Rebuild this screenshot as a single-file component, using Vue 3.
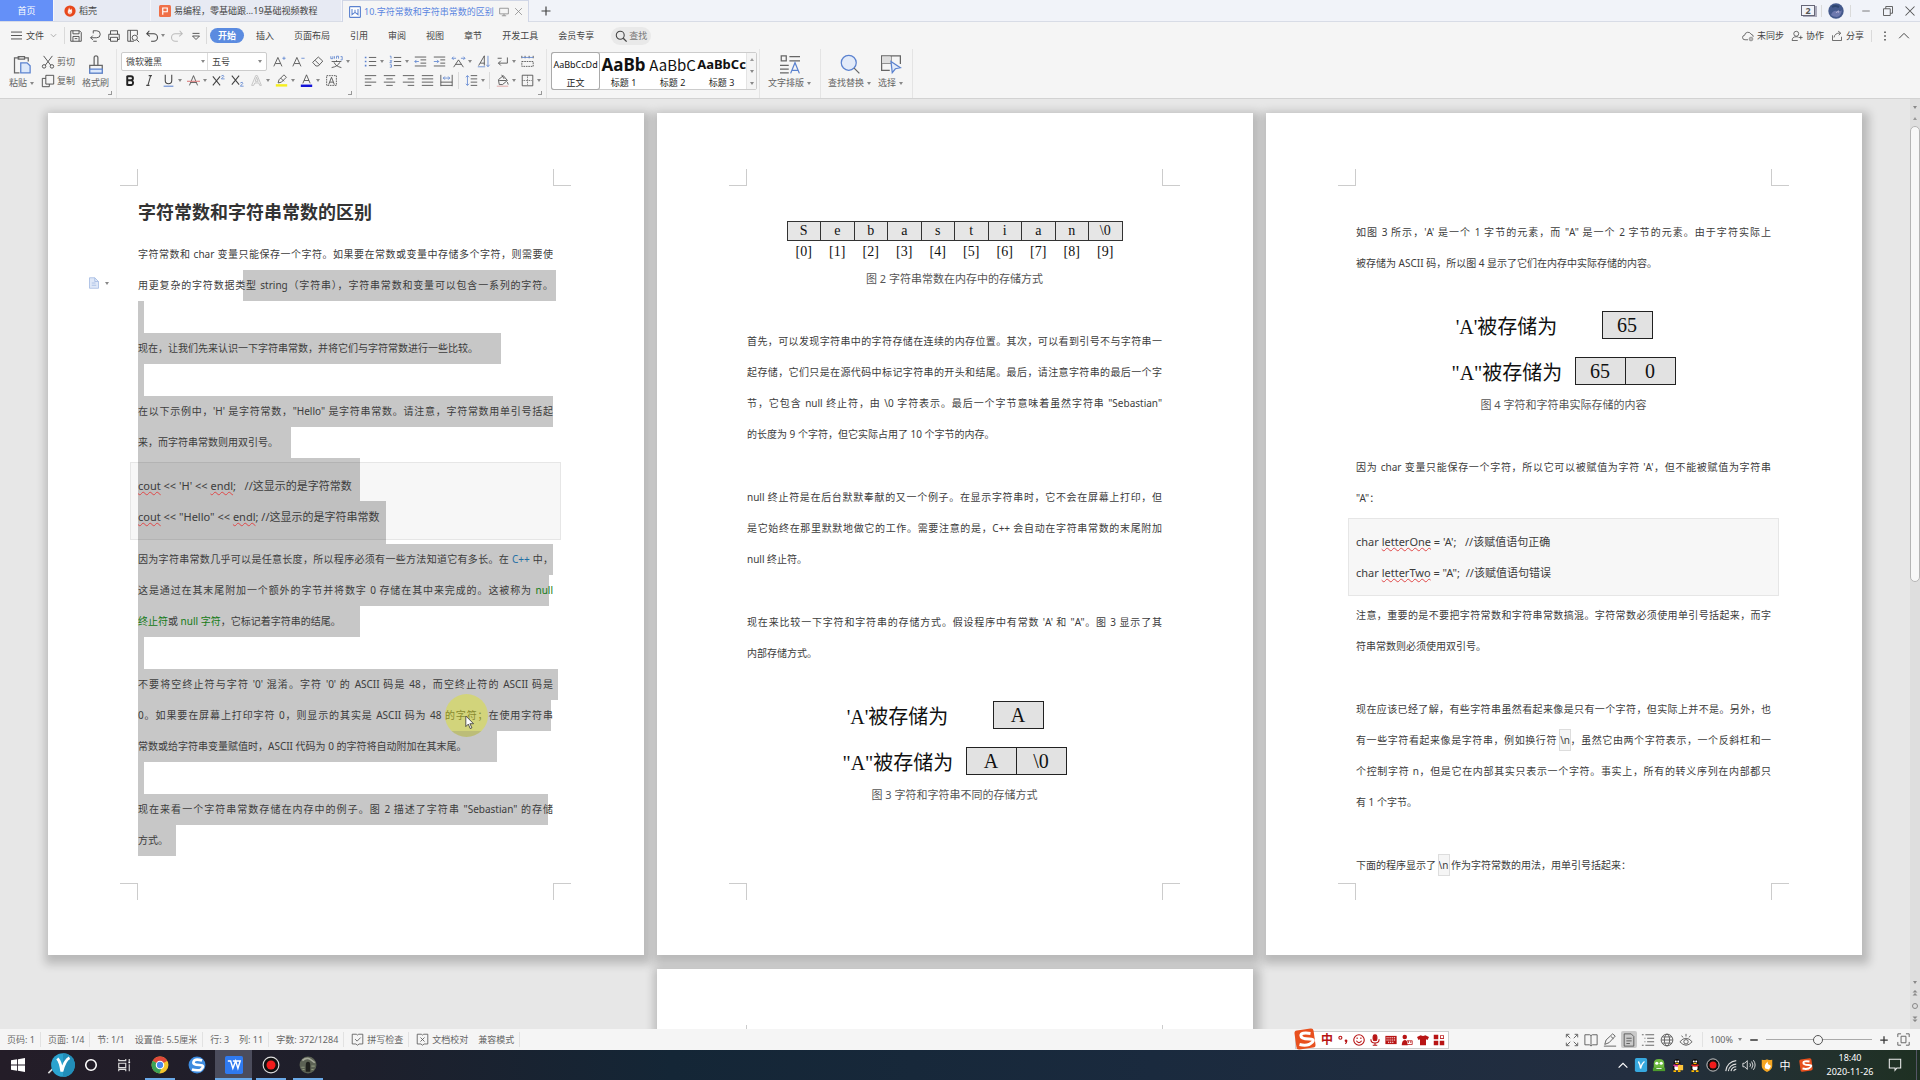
<template>
  <div class="app">
    <header class="titlebar">
      <button class="tab home">首页</button>
      <button v-for="tab in tabs" :key="tab.name" class="tab" :class="[tab.kind, { active: tab.active }]">
        <Icon :name="tab.icon" :size="12" />
        <span class="tab-name">{{ tab.name }}</span>
        <template v-if="tab.active">
          <Icon name="monitor" :size="10" class="dim" />
          <Icon name="close" :size="9" class="dim tab-close" />
        </template>
      </button>
      <button class="new-tab" aria-label="新建"><Icon name="plus" :size="12" /></button>
      <div class="window-tools">
        <span class="window-count">2</span>
        <i class="sep"></i>
        <Icon name="avatar" :size="16" />
        <i class="sep"></i>
        <button v-for="n in ['minimize', 'restore', 'close']" :key="n" :aria-label="n"><Icon :name="n" :size="12" /></button>
      </div>
    </header>

    <nav class="menu">
      <button class="file-menu"><Icon name="menu" :size="11" /><span>文件</span><Icon name="down" :size="7" class="dim" /></button>
      <i class="sep"></i>
      <div class="quick">
        <button v-for="q in quick" :key="q.icon" :class="{ faded: q.faded }" :aria-label="q.icon">
          <Icon :name="q.icon" :size="14" /><i v-if="q.caret" class="caret"></i>
        </button>
      </div>
      <i class="sep"></i>
      <div class="menu-items">
        <button v-for="(m, i) in menus" :key="m" :class="{ current: i === 0 }">{{ m }}</button>
      </div>
      <button class="find"><Icon name="search" :size="12" />查找</button>
      <div class="menu-right">
        <button v-for="a in actions" :key="a.text"><Icon :name="a.icon" :size="12" />{{ a.text }}</button>
        <i class="sep"></i>
        <button aria-label="more"><Icon name="dots" :size="12" /></button>
        <button aria-label="collapse"><Icon name="up" :size="12" /></button>
      </div>
    </nav>

    <section class="ribbon">
      <div class="group clipboard">
        <button class="big"><Icon name="paste" :size="20" /><span>粘贴<i class="caret"></i></span></button>
        <div class="stack">
          <button><Icon name="cut" :size="14" />剪切</button>
          <button><Icon name="copy" :size="14" />复制</button>
        </div>
        <button class="big"><Icon name="brush" :size="20" /><span>格式刷</span></button>
        <i class="corner"></i>
      </div>
      <div class="group font-group">
        <div class="tool-rows">
          <div class="tool-row">
            <span class="combo">
              <select v-model="font" class="font-name" aria-label="字体"><option>微软雅黑</option></select><i class="caret"></i>
              <select v-model="size" class="font-size" aria-label="字号"><option>五号</option></select><i class="caret"></i>
            </span>
            <button v-for="t in fontTools[0]" :key="t.icon" :aria-label="t.icon" class="tool">
              <Icon :name="t.icon" :size="16" class="glyph" /><i v-if="t.caret" class="caret"></i>
            </button>
          </div>
          <div class="tool-row">
            <button v-for="t in fontTools[1]" :key="t.icon" :aria-label="t.icon" class="tool">
              <Icon :name="t.icon" :size="16" class="glyph" /><i v-if="t.caret" class="caret"></i>
            </button>
          </div>
        </div>
        <i class="corner"></i>
      </div>
      <div class="group paragraph">
        <div class="tool-rows">
          <div v-for="(row, i) in paraTools" :key="i" class="tool-row">
            <template v-for="(t, j) in row" :key="j">
              <i v-if="t.sep" class="sep tall"></i>
              <button v-else class="tool" :aria-label="t.icon">
                <Icon :name="t.icon" :size="16" class="glyph" /><i v-if="t.caret" class="caret"></i>
              </button>
            </template>
          </div>
        </div>
        <i class="corner"></i>
      </div>
      <div class="group styles">
        <div class="gallery">
          <button v-for="(s, i) in styles" :key="s.name" class="style" :class="{ chosen: i === 0 }">
            <span class="sample" :class="s.kind">{{ s.sample }}</span>
            <span class="style-name">{{ s.name }}</span>
          </button>
          <div class="gallery-scroll">
            <i class="caret up"></i>
            <i class="caret"></i>
            <i class="caret"></i>
          </div>
        </div>
      </div>
      <div class="group wide">
        <button class="big"><Icon name="layout" :size="20" /><span>文字排版<i class="caret"></i></span></button>
      </div>
      <div class="group wide find-group">
        <button class="big"><Icon name="lens" :size="20" /><span>查找替换<i class="caret"></i></span></button>
        <button class="big"><Icon name="select" :size="20" /><span>选择<i class="caret"></i></span></button>
      </div>
    </section>

    <main class="workspace">
      <div class="pages">
        <article v-for="(page, p) in pages" :key="p" class="page">
          <i class="crop tl"></i><i class="crop tr"></i><i class="crop bl"></i><i class="crop br"></i>
          <template v-for="(block, b) in page" :key="b">
            <h1 v-if="block.title" class="title">{{ block.title }}</h1>
            <div v-else-if="block.blank" class="blank">
              <i v-if="block.sel" class="sel" :style="selStyle(block.sel)"></i>
            </div>
            <table v-else-if="block.cells" class="cells">
              <tbody>
                <tr><td v-for="(c, i) in block.cells" :key="i">{{ c }}</td></tr>
                <tr class="index"><td v-for="(c, i) in block.cells" :key="i">[{{ i }}]</td></tr>
              </tbody>
            </table>
            <div v-else-if="block.figure" class="figure">
              <div v-for="(row, i) in block.figure" :key="i" class="figure-row">
                <span class="figure-label">{{ row.label }}</span>
                <span class="boxes" :class="{ single: row.values.length === 1 }">
                  <b v-for="v in row.values" :key="v">{{ v }}</b>
                </span>
              </div>
            </div>
            <p v-else-if="block.caption" class="line caption">{{ block.caption }}</p>
            <div v-else class="text" :class="{ code: block.code }">
              <p v-for="(line, l) in block.lines" :key="l" class="line" :class="{ full: line.full }">
                <i v-if="line.sel" class="sel" :style="selStyle(line.sel)"></i>
                <span v-if="line.widget" class="paste-option"><Icon name="doc" :size="12" /><i class="caret"></i></span>
                <span v-for="(seg, s) in line.segs" :key="s" :class="seg[1]">{{ seg[0] }}</span>
                <span v-if="line.pointer" class="pointer"><Icon name="cursor" :size="16" class="cursor" /></span>
              </p>
            </div>
          </template>
        </article>
      </div>
      <aside class="scrollbar">
        <i class="caret split"></i>
        <i class="caret up"></i>
        <div class="thumb"></div>
        <div class="jump">
          <i class="caret"></i>
          <Icon name="jumpUp" :size="8" />
          <Icon name="ring" :size="8" />
          <Icon name="jumpDown" :size="8" />
        </div>
      </aside>
    </main>

    <footer class="status">
      <template v-for="(s, i) in status" :key="i">
        <i v-if="s === '|'" class="sep"></i>
        <span v-else class="status-item"><Icon v-if="s.icon" :name="s.icon" :size="13" />{{ s.text || s }}</span>
      </template>
      <div class="ime">
        <Icon name="sogou" :size="22" class="ime-logo" />
        <span class="ime-cn">中</span>
        <Icon v-for="n in ['punct', 'smile', 'mic', 'keyboard', 'person', 'shirt', 'grid']" :key="n" :name="n" :size="12" />
      </div>
      <div class="views">
        <button v-for="v in views" :key="v" :class="{ on: v === 'pageView' }" :aria-label="v"><Icon :name="v" :size="14" /></button>
      </div>
      <i class="sep"></i>
      <button class="zoom-value">100%<i class="caret"></i></button>
      <button aria-label="缩小"><Icon name="minusBold" :size="10" /></button>
      <input v-model="zoom" class="zoom" type="range" min="0" max="100" aria-label="缩放" />
      <button aria-label="放大"><Icon name="plusBold" :size="10" /></button>
      <button class="fit" aria-label="fit"><Icon name="fit" :size="13" /></button>
    </footer>

    <div class="taskbar">
      <button class="start" aria-label="start"><Icon name="windows" :size="14" /></button>
      <button class="vee" aria-label="v"><Icon name="vee" :size="26" /></button>
      <button class="cortana" aria-label="cortana"><Icon name="cortana" :size="14" /></button>
      <button class="taskview" aria-label="task view"><Icon name="taskview" :size="14" /></button>
      <button v-for="a in apps" :key="a.icon" class="app-button" :class="a.state" :aria-label="a.icon">
        <Icon :name="a.icon" :size="18" />
      </button>
      <div class="tray">
        <Icon v-for="t in tray" :key="t" :name="t" :size="14" />
        <span class="tray-cn">中</span>
        <Icon name="sogou" :size="14" class="tray-sogou" />
        <div class="clock"><span>18:40</span><span>2020-11-26</span></div>
        <Icon name="notice" :size="14" />
        <i class="desktop-edge"></i>
      </div>
    </div>
  </div>
</template>

<script setup>
  import { h, ref } from 'vue'

  const font = ref('微软雅黑')
  const size = ref('五号')
  const zoom = ref(49)

  const B = '#5b82cf'
  const penguin = (scarf) =>
    `<ellipse cx="8" cy="6" rx="4" ry="5" fill="#111" stroke="none"/><ellipse cx="8" cy="11" rx="5" ry="4" fill="#111" stroke="none"/><ellipse cx="8" cy="11" rx="3" ry="3" fill="#fff" stroke="none"/><circle cx="6.6" cy="4" r="1.1" fill="#fff" stroke="none"/><circle cx="9.4" cy="4" r="1.1" fill="#fff" stroke="none"/><ellipse cx="8" cy="6.2" rx="2" ry=".8" fill="#fb0" stroke="none"/><path d="M4 8q4 2 8 0" stroke="${scarf}" stroke-width="2"/><path d="M4 15h3M9 15h3" stroke="#fb0" stroke-width="2"/>`
  const record =
    '<circle cx="8" cy="8" r="7" fill="#111" stroke="#ddd" stroke-width="1"/><circle cx="8" cy="8" r="4" fill="#f01c1c" stroke="none"/>'

  // all icons share a 16x16 grid
  const icons = {
    docer: '<circle cx="8" cy="8" r="7.5" fill="#e8481c" stroke="none"/><path d="M8 13C4 12 4 8 7 3q1 2 1 3 2-1 2-2 3 7-2 9zM8 13V9" fill="#fff" stroke="#e8481c" stroke-width=".8"/>',
    ppt: '<rect width="16" height="16" rx="2" fill="#f07048" stroke="none"/><path d="M5 13V4h6v5H5" stroke="#fff" stroke-width="1.6"/>',
    writer: `<rect x=".8" y=".8" width="14.4" height="14.4" rx="1" stroke="${B}" fill="#fff" stroke-width="1.5"/><path d="M4 4v7.5l4-3 4 3V4M8 5v3" stroke="${B}" stroke-width="1.4"/>`,
    monitor: '<path d="M1 2h14v9H1zM8 11v3M4.500 14h7" stroke-width="1.3"/>',
    close: '<path d="M2 2l12 12M14 2L2 14" stroke-width="1.4"/>',
    plus: '<path d="M8 2v12M2 8h12" stroke-width="1.6"/>',
    minimize: '<path d="M3 8h10"/>',
    restore: '<path d="M2 5h9v9H2zM5 5V2h9v9h-3" stroke-width="1.2"/>',
    avatar: '<circle cx="8" cy="8" r="7.700" fill="#44598c" stroke="none"/><path d="M3 12q2-5 6-4t5-1q-1 6-5 7-4 0-6-2z" fill="#6d78ad" stroke="none"/><path d="M8 10q2-3 3-2l-1 2" stroke="#b0aed2"/><path d="M4 4q3-2 7 0" stroke="#2d456e" stroke-width="2"/>',
    menu: '<path d="M0 3h16M0 8h16M0 13h16" stroke-width="1.3"/>',
    down: '<path d="M2 5l6 6 6-6" stroke-width="1.5"/>',
    up: '<path d="M1.500 11L8 4.500l6.500 6.500" stroke-width="1.3"/>',
    save: '<path d="M2 2h10l2 2v10H2zM4.500 2v3.500h7V2M4.500 14V8.500h7V14M6.500 11h3"/>',
    export: '<path d="M6 2h4a4 4 0 010 8H3M5.500 7.500L3 10l2.500 2.500M6 14h4M6 2v3"/>',
    print: '<path d="M4 6V2h8v4M4 12H2V6h12v6h-2M4 9.500h8V14H4z"/>',
    preview: '<path d="M9 14H2V1.500h11V7M5 1.500V14"/><circle cx="10" cy="10" r="3"/><path d="M12.200 12.200l2.800 2.800"/>',
    undo: '<path d="M5 2L2 5.500 5.500 8.500M2 5.500h8a4 4 0 010 8.500H7" stroke-width="1.200"/>',
    redo: '<path d="M11 2l3 3.500-3.500 3M14 5.500H6A4 4 0 006 14h3" stroke-width="1.200"/>',
    more: '<path d="M4 5h8M4 8l4 4 4-4z"/>',
    search: '<circle cx="7" cy="7" r="5.300" stroke-width="1.4"/><path d="M11 11l4.500 4.500" stroke-width="1.8"/>',
    cloud: '<path d="M8 13H4a3 3 0 01-.5-6 4.500 4.500 0 018.500-1.500Q15 6 15 9"/><circle cx="12" cy="12" r="2.500" fill="#bbb" stroke="#888"/>',
    collab: '<circle cx="7" cy="5" r="3.300"/><path d="M1.500 14q0-5 5.500-5 2 0 3 .8M1.500 14H9M13 7.500v5M10.500 10h5"/>',
    share: '<path d="M2 7v7h12V9M4 10q1-6 8-6M9.500 1.500L13 4l-2.500 3"/>',
    dots: '<path d="M8 2v2M8 7v2M8 12v2" stroke-width="2"/>',
    paste: `<path d="M6 3H2v12h4M10 3h3v3"/><path d="M5 2h5v2H5z"/><path d="M7 7h5l2.500 2.500V15H7z" fill="#dce8fa" stroke="${B}"/>`,
    cut: '<path d="M3 1l8 10.500M13 1L5 11.500"/><circle cx="3.500" cy="13" r="2"/><circle cx="12.500" cy="13" r="2"/>',
    copy: '<path d="M5.500 1.500h9v10h-9zM5.500 5h-4v9.500h8v-3"/>',
    brush: `<path d="M6.500 9V3a1.500 1.500 0 013 0v6M3 15V9h10v6z"/><path d="M3 12h10v3.300H3z" stroke="${B}" fill="#dce8fa"/>`,
    fontUp: `<path d="M1 14L6 3l5 11M3 10.500h6"/><path d="M11.500 4h4M13.500 2v4" stroke="${B}"/>`,
    fontDown: `<path d="M1 14L6 3l5 11M3 10.500h6"/><path d="M11.500 4h4" stroke="${B}"/>`,
    eraser: '<path d="M2 9l7-6.500 5.500 5L9 13.500H6zM5 6.500l5.500 5.500"/>',
    phonetic: `<path d="M2 8h12M8 6.500V8M5 9q2 5 9 6.500M12 9q-2 5-10 6.500"/><path d="M1 1.500v3h2.500v-3M5.500 1.500v3M8 4.500v-3h2.500v3M13 2h2v4h-2" stroke="${B}"/>`,
    bold: '<path d="M4 2v12M4 2.800h4.500a2.500 2.500 0 010 5H4h5a3 3 0 010 5.800H4" stroke-width="2.400" stroke="#222"/>',
    italic: '<path d="M7 2h4M4 14h4M9.500 2l-3.500 12" stroke-width="1.3"/>',
    underline: `<path d="M4 1v7a4 4 0 008 0V1" stroke-width="1.3"/><path d="M2 15h12" stroke="${B}" stroke-width="1.3"/>`,
    strike: '<path d="M3 14L8 2l5 12M4.500 10.500h7"/><path d="M0 9h16" stroke="#d88" stroke-width="1.500"/>',
    sup: `<path d="M1 3l9 11M10 3L1 14" stroke-width="1.3"/><path d="M11.500 2.500q3-2 3 .5l-3 3h4" stroke="${B}"/>`,
    sub: `<path d="M1 2l9 11M10 2L1 13" stroke-width="1.3"/><path d="M11.500 11q3-2 3 .5l-3 3.500h4" stroke="${B}"/>`,
    effect: '<path d="M2 14L7 2h2l5 12h-2l-1.200-3H6l-1.500 3zM6.500 9h3.500L8 4z" stroke="#bbb"/>',
    marker: '<path d="M4 10l1-3 6-6 3 3-6 6-4 1zM7 5l4 4"/><path d="M1 14h14" stroke="#f5ee20" stroke-width="3"/>',
    color: '<path d="M3.500 11.500L8 1l4.500 10.500M5 8h6"/><path d="M1 14.500h14" stroke="#1414d8" stroke-width="3"/>',
    boxed: '<path d="M2 2h12v12H2z" stroke-dasharray="2 1"/><path d="M4.500 13L8 4l3.500 9M6 10h4"/>',
    bullets: `<path d="M6 3h9M6 8h9M6 13h9"/><path d="M1 3h2M1 8h2M1 13h2" stroke="${B}" stroke-width="2"/>`,
    numbers: `<path d="M6 3h9M6 8h9M6 13h9"/><path d="M1 1.500h1.500v3M1 7h2.500L1 9.500h2.500M1 12h2v3H1" stroke="${B}"/>`,
    outdent: `<path d="M1 2.500h14M8 6h7M8 10h7M1 13.500h14"/><path d="M6 8H1M3 6L1 8l2 2" stroke="${B}"/>`,
    indent: `<path d="M1 2.500h14M9 6h6M9 10h6M1 13.500h14"/><path d="M1 8h6M5 6l2 2-2 2" stroke="${B}"/>`,
    scaleA: `<path d="M2 15l6-9 6 9M4.500 11.500h7"/><path d="M0 4h5M2 2L0 4l2 2M11 4h5M14 2l2 2-2 2" stroke="${B}"/>`,
    sort: `<path d="M2 13L9 1v12M4 10h5"/><path d="M1 14.500h9M13.500 1v13M11.500 12l2 2.500 2-2.500" stroke="${B}"/>`,
    wrap: '<path d="M14 3v7H3M6 7l-3 3 3 3M2 4h5"/>',
    ruler: `<path d="M1 1v3M15 1v3M5 1v3M10 1v3"/><path d="M1 8h14v6H1z" stroke-dasharray="2 1"/><path d="M1 3h14" stroke="${B}"/>`,
    left: '<path d="M1 2h14M1 6h8M1 10h14M1 14h8"/>',
    center: '<path d="M1 2h14M4 6h8M1 10h14M4 14h8"/>',
    right: '<path d="M1 2h14M7 6h8M1 10h14M7 14h8"/>',
    justify: '<path d="M1 2h14M1 6h14M1 10h14M1 14h14"/>',
    distribute: `<path d="M1 1v14M15 1v14M1 10h14M1 14h14"/><path d="M4 5h8M6 3L4 5l2 2M10 3l2 2-2 2" stroke="${B}"/>`,
    spacing: `<path d="M7 2h8M7 6h8M7 10h8M7 14h8"/><path d="M3 2v12M1 4l2-2 2 2M1 12l2 2 2-2" stroke="${B}"/>`,
    fill: '<path d="M3 7l6-5 5 6-6 5H4zM4 8h9M7 1l3 5M14 10l1 3"/><path d="M1 15h14" stroke="#d99"/>',
    border: '<path d="M1.500 1.500h13v13h-13z"/><path d="M8 2v12M2 8h12" stroke-dasharray="1 1"/>',
    layout: `<path d="M1 1.500h4v4H1zM7.500 2H16M7.500 5.500H16M0 9h7M0 12h7M0 15h7"/><path d="M8.500 15.500L12 7l3.500 8.500M9.500 13h5" stroke="${B}"/>`,
    lens: `<circle cx="7" cy="7" r="6" fill="#e3ebf9" stroke="${B}"/><path d="M11.300 11.300l4.200 4.200"/>`,
    select: `<path d="M7 13H.5V1.500h15V8M8 1.500V7M.5 7.500H8"/><path d="M.8 2H8v5.500H.8z" fill="#ddd" stroke="none"/><path d="M8 6l7.500 5-4 .8L9 15z" fill="#e3ebf9" stroke="${B}"/>`,
    doc: '<path d="M2 1h7l5 5v9H2z" fill="#dfe8f8" stroke="#9db6e0"/><path d="M5 8h5M5 11h6M9 1v5h5" stroke="#9db6e0"/>',
    cursor: '<path d="M1 0v13l3-3 2.500 5.500 2-1L6 9.500h4.500z" fill="#fff" stroke="#333"/>',
    jumpUp: '<path d="M3 7l5-5 5 5zM3 13l5-5 5 5z" fill="#888" stroke="none"/>',
    jumpDown: '<path d="M3 3l5 5 5-5zM3 9l5 5 5-5z" fill="#888" stroke="none"/>',
    ring: '<circle cx="8" cy="8" r="5" stroke="#888" stroke-width="2"/>',
    spell: '<path d="M8 2.500L6.500 1.500H1.500v12H6L8 15l2-1.500h4.500v-12H9.500zM5 7.500l2.500 2.500L12 5.500"/>',
    proof: '<path d="M8 2.500L6.500 1.500H1.500v12H6L8 15l2-1.500h4.500v-12H9.500zM5.500 5.500l5 5M10.500 5.500l-5 5"/>',
    full: '<path d="M1.500 5V1.500H5M11 1.500h3.500V5M14.500 11v3.500H11M5 14.500H1.500V11M2 2l4 4M14 2l-4 4M14 14l-4-4M2 14l4-4"/>',
    book: '<path d="M8 3L6.500 2H1v11.500h5.500L8 15l1.500-1.500H15V2H9.500zM8 3v11"/>',
    pen: '<path d="M2 13l1.500-5L11 1l3 2.500L7 11zM1 15h14M9 4l3 2.500"/>',
    pageView: '<path d="M2.500 1h8l3 3v11h-11zM5 6h6M5 9h6M5 12h4"/>',
    outline: '<path d="M1 2h2M5 2h10M4 6h1M7 6h8M4 10h1M7 10h8M1 14h2M5 14h10"/>',
    globe: '<circle cx="8" cy="8" r="6.700"/><path d="M1.500 8h13M2.500 4.500h11M2.500 11.500h11"/><ellipse cx="8" cy="8" rx="3" ry="6.700"/>',
    eye: '<path d="M1 10q7-8 14 0-7 8-14 0zM8 1v3M3 3l1.500 2M13 3l-1.500 2"/><circle cx="8" cy="10" r="2.500"/>',
    minusBold: '<path d="M2 8h12" stroke="#333" stroke-width="2.400"/>',
    plusBold: '<path d="M8 2v12M2 8h12" stroke="#333" stroke-width="2"/>',
    fit: '<path d="M1 5V1h4M11 1h4v4M15 11v4h-4M5 15H1v-4M5 4h6v8H5z" stroke-width="1.200"/>',
    sogou: '<rect x="1" y="1" width="14" height="14" rx="2" fill="#e8501e" stroke="none" transform="rotate(-8 8 8)"/><path d="M12 4Q5 3 5 5.500T11 8t0 4q-3 1-7 0" stroke="#fff" stroke-width="2.200"/>',
    punct: '<circle cx="4.500" cy="5" r="2" stroke="#b81414" stroke-width="1.500"/><circle cx="12" cy="9" r="1.800" fill="#b81414" stroke="none"/><path d="M13 9q0 3-2 4" stroke="#b81414" stroke-width="1.500"/>',
    smile: '<g stroke="#b81414" stroke-width="1.500"><circle cx="8" cy="8" r="7"/><path d="M4.500 9q3.500 5 7 0M5.500 4.500v2M10.500 4.500v2"/></g>',
    mic: '<g stroke="#b81414" stroke-width="1.500"><rect x="5.500" y="1" width="5" height="8" rx="2.500" fill="#b81414"/><path d="M2.500 7q0 5 5.500 5t5.500-5M8 12v3M5 15h6"/></g>',
    keyboard: '<path d="M.5 2.500h15v11H.5z" fill="#b81414" stroke="none"/><path d="M2 5h12M2 8h12M4 11h8" stroke="#fff" stroke-width="1.300" stroke-dasharray="1.500 1"/>',
    person: '<circle cx="5" cy="4" r="3" fill="#b81414" stroke="none"/><path d="M1 15q0-7 5-7l3 3v4z" fill="#b81414" stroke="none"/><path d="M8 9h7v5H8zM10 9v3M13 9v3" fill="#fff" stroke="#b81414"/>',
    shirt: '<path d="M5 1.500q3 2 6 0L16 4l-2 4-2-1v8H4V7L2 8 0 4z" fill="#b81414" stroke="none"/>',
    grid: '<path d="M1 1h6v6H1zM9.500 1.500h5v5h-5zM1 9h6v6H1zM9 9h6v6H9z" fill="#b81414" stroke="none"/><path d="M10.500 2.500h3v3h-3z" fill="#fff" stroke="none"/>',
    windows: '<path d="M0 2.500L7 1.500V7.500H0zM8 1.300L16 0v7.500H8zM0 8.500h7v6L0 13.500zM8 8.500h8V16L8 14.700z" fill="#fff" stroke="none"/>',
    vee: '<path d="M-1 13l3-3" stroke="#ddd"/><circle cx="8" cy="8" r="7.300" fill="#2ba3cf" stroke="none"/><path d="M8 .7a7.300 7.300 0 010 14.600z" fill="#228eb9" stroke="none"/><path d="M4.500 4q2 2 2.800 8Q9 5 12 3.500" stroke="#fff" stroke-width="1.800"/>',
    cortana: '<circle cx="8" cy="8" r="6" stroke="#fff" stroke-width="1.800"/>',
    taskview: '<path d="M2 1v2h8V1M2 6h8v5H2zM2 15v-2h8v2M14 1v3M14 7v8" stroke="#ddd" stroke-width="1.300"/><path d="M13 5h2" stroke="#fff" stroke-width="2"/>',
    chrome: '<circle cx="8" cy="8" r="7.500" fill="#f5c52c" stroke="none"/><path d="M8 8L1.500 4.250A7.500 7.500 0 0114.500 4.250L13 5z" fill="#e0483a" stroke="none"/><path d="M8 8L1.500 4.250A7.500 7.500 0 007.500 15.500L10 9z" fill="#3da257" stroke="none"/><circle cx="8" cy="8" r="3.300" fill="#4a88ee" stroke="#fff"/>',
    sblue: '<circle cx="8" cy="8" r="7.500" fill="#3e8ce0" stroke="none"/><path d="M12.500 4Q6 2 5 5t5 3 1 4.500q-4 .5-7.500-.5" stroke="#fff" stroke-width="2.400"/>',
    wps: '<rect width="16" height="16" rx="1.500" fill="#2f7af0" stroke="none"/><path d="M2.500 4.500H5l2 6.500 2.500-6.500L11.500 11l2-6.500H7" stroke="#fff" stroke-width="1.300"/>',
    record,
    trayRecord: record,
    photo: '<circle cx="8" cy="8" r="7.500" fill="#5c6254" stroke="none"/><path d="M3 4q4-3 7-1t4 3" stroke="#a5a99a" stroke-width="1.500"/><path d="M6 14V8q0-3 2-3t2 3v6" fill="#20221e" stroke="none"/><path d="M2 10h3M11 9h3M11 12h2M3 12h2" stroke="#8d967c"/>',
    trayUp: '<path d="M3 11l5-5 5 5" stroke="#fff" stroke-width="1.400"/>',
    trayV: '<rect x="1" width="14" height="16" rx="2" fill="#37a8df" stroke="none"/><path d="M5 4q2 3 2.500 8Q9 6 12 4" stroke="#fff" stroke-width="1.600"/>',
    frog: '<path d="M2 14V6q0-5 6-5t6 5v8z" fill="#6cb83e" stroke="none"/><path d="M1 11h14v4H1z" fill="#4c9a2c" stroke="none"/><circle cx="5.500" cy="6" r="1.800" fill="#fff" stroke="none"/><circle cx="10.500" cy="6" r="1.800" fill="#fff" stroke="none"/><path d="M5 12h6" stroke="#fff"/>',
    qqPink: penguin('#e0359c') + '<path d="M9 8h6v6H9z" fill="#ffc53a" stroke="none"/>',
    qq: penguin('#e02222'),
    wifi: '<path d="M2 15A13 13 0 0114 3M5 15a9 9 0 019-8M8 15a6 6 0 016-5M11 15a3 3 0 013-2" stroke="#ddd" stroke-width="1.300"/>',
    sound: '<path d="M1 6h2l3-3v10L3 10H1zM9 6q1.500 2 0 4M11 4q3 4 0 8M13 2.500q4 5.500 0 11" stroke="#eee"/>',
    shield: '<path d="M2 2q6 1 6-1 0 2 6 1v7q0 4-6 7-6-3-6-7z" fill="#f5a623" stroke="none"/><path d="M6 12q-2-4 3-8-1 3 2 4t-1 5z" fill="#fff" stroke="none"/>',
    notice: '<path d="M1.500 1.500h13v10H10L8 14v-2.500H1.500z" stroke="#eee" stroke-width="1.200"/>',
  }

  const Icon = (props) =>
    h('svg', {
      width: props.size,
      height: props.size,
      viewBox: '0 0 16 16',
      fill: 'none',
      stroke: 'currentColor',
      'aria-hidden': 'true',
      innerHTML: icons[props.name],
    })
  Icon.props = ['name', 'size']

  const tabs = [
    { name: '稻壳', icon: 'docer', kind: 'docer' },
    { name: '易编程，零基础跟...19基础视频教程', icon: 'ppt', kind: 'slides' },
    { name: '10.字符常数和字符串常数的区别', icon: 'writer', kind: 'writer', active: true },
  ]

  const quick = [
    { icon: 'save' },
    { icon: 'export' },
    { icon: 'print' },
    { icon: 'preview' },
    { icon: 'undo', caret: true },
    { icon: 'redo', faded: true },
    { icon: 'more' },
  ]
  const menus = ['开始', '插入', '页面布局', '引用', '审阅', '视图', '章节', '开发工具', '会员专享']
  const actions = [
    { icon: 'cloud', text: '未同步' },
    { icon: 'collab', text: '协作' },
    { icon: 'share', text: '分享' },
  ]

  // a trailing "+" means the tool has a drop-down arrow, "|" is a divider
  const tools = (list) =>
    list.split(' ').map((t) => (t === '|' ? { sep: true } : { icon: t.replace('+', ''), caret: t.endsWith('+') }))

  const fontTools = [
    tools('fontUp fontDown eraser phonetic+'),
    tools('bold italic underline+ strike+ sup sub effect+ marker+ color+ boxed'),
  ]
  const paraTools = [
    tools('bullets+ numbers+ outdent indent scaleA+ sort wrap+ ruler'),
    tools('left center right justify distribute | spacing+ | fill+ border+'),
  ]
  const styles = [
    { sample: 'AaBbCcDd', name: '正文', kind: 'normal' },
    { sample: 'AaBb', name: '标题 1', kind: 'h1' },
    { sample: 'AaBbC', name: '标题 2', kind: 'h2' },
    { sample: 'AaBbCc', name: '标题 3', kind: 'h3' },
  ]

  const status = [
    '页码: 1', '|', '页面: 1/4', '|', '节: 1/1', '设置值: 5.5厘米', '|', '行: 3', '列: 11', '|', '字数: 372/1284', '|',
    { icon: 'spell', text: '拼写检查' }, '|', { icon: 'proof', text: '文档校对' }, '兼容模式', '|',
  ]
  const views = ['full', 'book', 'pen', 'pageView', 'outline', 'globe', 'eye']
  const apps = [
    { icon: 'chrome', state: 'running' },
    { icon: 'sblue' },
    { icon: 'wps', state: 'running focused' },
    { icon: 'record', state: 'running' },
    { icon: 'photo', state: 'running' },
  ]
  const tray = ['trayUp', 'trayV', 'frog', 'qqPink', 'qq', 'trayRecord', 'wifi', 'sound', 'shield']

  const selStyle = ([from, to]) => ({ left: from + 'px', width: to - from + 'px' })

  const blank = (sel) => ({ blank: true, sel })
  const segs = (t) => (Array.isArray(t) ? t : [[t]])
  // line that fills the measure / last line of a paragraph
  const full = (t, sel, extra) => ({ segs: segs(t), sel, full: true, ...extra })
  const last = (t, sel) => ({ segs: segs(t), sel })
  const para = (...lines) => ({ lines })
  const code = (...lines) => ({ lines, code: true })

  const pages = [
    [
      { title: '字符常数和字符串常数的区别' },
      para(
        full('字符常数和 char 变量只能保存一个字符。如果要在常数或变量中存储多个字符，则需要使'),
        full('用更复杂的字符数据类型 string（字符串），字符串常数和变量可以包含一系列的字符。', [105, 418], { widget: true }),
      ),
      blank([0, 6]),
      para(last('现在，让我们先来认识一下字符串常数，并将它们与字符常数进行一些比较。', [0, 363])),
      blank([0, 6]),
      para(
        full('在以下示例中，\'H\' 是字符常数，"Hello" 是字符串常数。请注意，字符常数用单引号括起', [0, 415]),
        last('来，而字符串常数则用双引号。', [0, 153]),
      ),
      code(
        last([['cout', 'err'], [" << 'H' << "], ['endl', 'err'], [';   //这显示的是字符常数']], [0, 222]),
        last([['cout', 'err'], [' << "Hello" << '], ['endl', 'err'], ['; //这显示的是字符串常数']], [0, 248]),
      ),
      para(
        full([['因为字符串常数几乎可以是任意长度，所以程序必须有一些方法知道它有多长。在 '], ['C++', 'link'], [' 中，']], [0, 415]),
        full([['这是通过在其末尾附加一个额外的字节并将数字 0 存储在其中来完成的。这被称为 '], ['null', 'term']], [0, 411]),
        last([['终止符', 'term'], ['或 '], ['null 字符', 'term'], ['，它标记着字符串的结尾。']], [0, 222]),
      ),
      blank([0, 6]),
      para(
        full("不要将空终止符与字符 '0' 混淆。字符 '0' 的 ASCII 码是 48，而空终止符的 ASCII 码是", [0, 420]),
        full('0。如果要在屏幕上打印字符 0，则显示的其实是 ASCII 码为 48 的字符；在使用字符串', [0, 413], { pointer: true }),
        last('常数或给字符串变量赋值时，ASCII 代码为 0 的字符将自动附加在其末尾。', [0, 359]),
      ),
      blank([0, 6]),
      para(
        full('现在来看一个字符串常数存储在内存中的例子。图 2 描述了字符串 "Sebastian" 的存储', [0, 410]),
        last('方式。', [0, 38]),
      ),
    ],
    [
      { cells: ['S', 'e', 'b', 'a', 's', 't', 'i', 'a', 'n', '\\0'] },
      { caption: '图 2 字符串常数在内存中的存储方式' },
      blank(),
      para(
        full('首先，可以发现字符串中的字符存储在连续的内存位置。其次，可以看到引号不与字符串一'),
        full('起存储，它们只是在源代码中标记字符串的开头和结尾。最后，请注意字符串的最后一个字'),
        full('节，它包含 null 终止符，由 \\0 字符表示。最后一个字节意味着虽然字符串 "Sebastian"'),
        last('的长度为 9 个字符，但它实际占用了 10 个字节的内存。'),
      ),
      blank(),
      para(
        full('null 终止符是在后台默默奉献的又一个例子。在显示字符串时，它不会在屏幕上打印，但'),
        full('是它始终在那里默默地做它的工作。需要注意的是，C++ 会自动在字符串常数的末尾附加'),
        last('null 终止符。'),
      ),
      blank(),
      para(
        full('现在来比较一下字符和字符串的存储方式。假设程序中有常数 \'A\' 和 "A"。图 3 显示了其'),
        last('内部存储方式。'),
      ),
      { figure: [{ label: "'A'被存储为", values: ['A'] }, { label: '"A"被存储为', values: ['A', '\\0'] }] },
      { caption: '图 3 字符和字符串不同的存储方式' },
    ],
    [
      blank(),
      para(
        full('如图 3 所示，\'A\' 是一个 1 字节的元素，而 "A" 是一个 2 字节的元素。由于字符实际上'),
        last('被存储为 ASCII 码，所以图 4 显示了它们在内存中实际存储的内容。'),
      ),
      { figure: [{ label: "'A'被存储为", values: ['65'] }, { label: '"A"被存储为', values: ['65', '0'] }] },
      { caption: '图 4 字符和字符串实际存储的内容' },
      blank(),
      para(
        full("因为 char 变量只能保存一个字符，所以它可以被赋值为字符 'A'，但不能被赋值为字符串"),
        last('"A"：'),
      ),
      code(
        last([['char '], ['letterOne', 'err'], [" = 'A';   //该赋值语句正确"]]),
        last([['char '], ['letterTwo', 'err'], [' = "A";  //该赋值语句错误']]),
      ),
      para(
        full('注意，重要的是不要把字符常数和字符串常数搞混。字符常数必须使用单引号括起来，而字'),
        last('符串常数则必须使用双引号。'),
      ),
      blank(),
      para(
        full('现在应该已经了解，有些字符串虽然看起来像是只有一个字符，但实际上并不是。另外，也'),
        full([['有一些字符看起来像是字符串，例如换行符 '], ['\\n', 'mark'], ['，虽然它由两个字符表示，一个反斜杠和一']]),
        full('个控制字符 n，但是它在内部其实只表示一个字符。事实上，所有的转义序列在内部都只'),
        last('有 1 个字节。'),
      ),
      blank(),
      para(last([['下面的程序显示了 '], ['\\n', 'mark'], [' 作为字符常数的用法，用单引号括起来：']])),
    ],
    [],
  ]
</script>

<style>
  html,
  body {
    background: #e7e7e7;
    overflow: hidden;
  }
</style>

<style scoped>
  .app {
    display: flex;
    flex-direction: column;
    height: 100vh;
    font-family: "Noto Sans", "Noto Sans CJK SC", sans-serif;
    font-size: 9px;
    color: #444;
  }

  button,
  select {
    font: inherit;
    color: inherit;
    background: none;
    border: none;
    padding: 0;
    margin: 0;
    display: flex;
    align-items: center;
    white-space: nowrap;
  }

  svg {
    flex: none;
    display: block;
    overflow: visible;
  }

  .sep {
    width: 1px;
    height: 12px;
    background: #dadada;
    flex: none;
  }

  .caret {
    flex: none;
    border: 2px solid transparent;
    border-top: 3px solid #888;
    border-bottom: none;
  }

  .caret.up {
    border-top: none;
    border-bottom: 3px solid #999;
  }

  .dim {
    color: #888;
  }

  /* title bar */
  .titlebar {
    display: flex;
    box-sizing: border-box;
    height: 22px;
    background: #f1f3f9;
    border-bottom: 1px solid #d8dce6;
    flex: none;
  }

  .tab {
    gap: 3px;
    padding: 0 8px 0 10px;
    background: #e7eaf3;
    border-right: 1px solid #f4f5fa;
    height: 21px;
  }

  .tab.home {
    width: 54px;
    padding: 0;
    justify-content: center;
    background: #6490f8;
    color: #fff;
  }

  .tab.docer {
    width: 97px;
  }

  .tab.slides {
    width: 191px;
    padding-left: 8px;
  }

  .tab.writer {
    width: 187px;
    padding-left: 6px;
    height: 22px;
    background: #f5f5f5;
    border: 1px solid #d0d6e6;
    border-bottom: none;
    color: #5b86e0;
  }

  .tab .tab-name {
    flex: none;
  }

  .tab.writer .dim {
    margin-left: 2px;
  }

  .new-tab {
    padding: 0 11px;
    color: #444;
  }

  .window-tools {
    margin-left: auto;
    display: flex;
    align-items: center;
    gap: 6px;
    padding-right: 3px;
    color: #555;
  }

  .window-tools button {
    margin-left: 2px;
    width: 14px;
    justify-content: center;
  }

  .window-count {
    width: 12px;
    line-height: 9px;
    text-align: center;
    font-weight: bold;
    border: 1px solid #667;
    box-shadow: 2px 1px 0 #aab;
  }

  /* menu */
  .menu {
    display: flex;
    align-items: center;
    height: 27px;
    background: #f5f5f5;
    padding-left: 11px;
    flex: none;
  }

  .menu > .sep {
    height: 17px;
  }

  .file-menu {
    gap: 4px;
    margin-right: 7px;
  }

  .file-menu .dim {
    margin-left: 2px;
  }

  .quick {
    display: flex;
    align-items: center;
    gap: 5px;
    padding: 0 3px 0 4px;
  }

  .quick .caret {
    margin: 0 0 0 2px;
  }

  .quick .faded {
    color: #bbb;
  }

  .menu-items {
    display: flex;
    align-items: center;
    gap: 20px;
    padding-left: 3px;
  }

  .menu-items .current {
    padding: 0 8px;
    height: 15px;
    margin-right: -8px;
    border-radius: 8px;
    background: #5b8be0;
    color: #fff;
    font-weight: bold;
  }

  .find {
    gap: 2px;
    height: 18px;
    padding: 0 4px;
    margin-left: 17px;
    border-radius: 9px;
    background: #e9e9e9;
    color: #777;
  }

  .find svg {
    color: #444;
  }

  .menu-right {
    margin-left: auto;
    display: flex;
    align-items: center;
    gap: 7px;
    padding-right: 10px;
  }

  .menu-right button {
    gap: 3px;
  }

  /* ribbon */
  .ribbon {
    display: flex;
    height: 49px;
    background: #f5f5f5;
    border-bottom: 1px solid #d2d2d2;
    flex: none;
  }

  .group {
    position: relative;
    display: flex;
    align-items: flex-start;
    padding: 3px 7px 0 4px;
    border-right: 1px solid #e4e4e4;
  }

  .corner {
    position: absolute;
    right: 4px;
    bottom: 3px;
    width: 3px;
    height: 3px;
    border-right: 1px solid #999;
    border-bottom: 1px solid #999;
  }

  .clipboard {
    gap: 7px;
    padding: 3px 7px 0 9px;
  }

  .font-group {
    padding-right: 4px;
  }

  .big {
    flex-direction: column;
    height: 38px;
    justify-content: space-between;
    line-height: 14px;
    color: #666;
  }

  .big svg {
    margin-top: 2px;
  }

  .big span {
    display: flex;
    align-items: center;
    gap: 3px;
  }

  .stack {
    display: flex;
    flex-direction: column;
  }

  .stack button {
    height: 19px;
    gap: 2px;
    color: #666;
  }

  .stack svg {
    color: #444;
  }

  .tool-rows {
    display: flex;
    flex-direction: column;
  }

  .tool-row {
    display: flex;
    align-items: center;
    height: 19px;
  }

  .tool .glyph {
    width: 13px;
    height: 13px;
    margin: 0 3px;
  }

  .tool .caret {
    margin-right: 2px;
  }

  .combo {
    display: flex;
    align-items: center;
    height: 17px;
    width: 144px;
    margin-right: 3px;
    background: #fff;
    border: 1px solid #ccc;
    border-radius: 2px;
  }

  .combo select {
    appearance: none;
    padding: 0 4px;
    height: 17px;
  }

  .combo .font-name {
    width: 79px;
  }

  .combo .font-size {
    width: 51px;
    margin-left: 2px;
    border-left: 1px solid #ddd;
  }

  .paragraph {
    padding-right: 3px;
  }

  .sep.tall {
    height: 17px;
    margin: 0 3px 0 2px;
  }

  .styles {
    padding-right: 2px;
  }

  .gallery {
    display: flex;
    height: 36px;
    background: #fff;
    border: 1px solid #ccc;
    border-radius: 2px;
  }

  .style {
    flex-direction: column;
    justify-content: space-between;
    width: 49px;
    height: 36px;
    overflow: hidden;
    color: #222;
  }

  .style.chosen {
    box-shadow: 0 0 0 1px #aaa;
    border-radius: 2px;
    width: 47px;
  }

  .sample {
    line-height: 23px;
    color: #111;
  }

  .sample.h1 {
    font-size: 17px;
    font-weight: bold;
  }

  .sample.h2 {
    font-family: "Noto Sans CJK SC", sans-serif;
    font-size: 15px;
  }

  .sample.h3 {
    font-size: 13px;
    font-weight: bold;
  }

  .style-name {
    line-height: 13px;
  }

  .gallery-scroll {
    width: 9px;
    background: #f4f4f4;
    border-left: 1px solid #e4e4e4;
    display: flex;
    flex-direction: column;
    align-items: center;
    justify-content: space-around;
  }

  .wide {
    padding: 3px 9px 0 8px;
  }

  .find-group {
    gap: 7px;
    padding-left: 7px;
  }

  /* document */
  .workspace {
    flex: 1;
    min-height: 0;
    display: flex;
    background: #e7e7e7;
    overflow: hidden;
  }

  .pages {
    flex: 1;
    display: flex;
    flex-wrap: wrap;
    justify-content: center;
    align-content: flex-start;
    gap: 14px 13px;
    padding-top: 14px;
  }

  .page {
    position: relative;
    box-sizing: border-box;
    width: 596px;
    height: 842px;
    padding: 72px 91px 72px 90px;
    background: #fff;
    box-shadow: 2px 4px 9px 5px rgba(0, 0, 0, 0.2);
    font-size: 10px;
    color: #3c3c3c;
  }

  .crop {
    position: absolute;
    width: 17px;
    height: 16px;
    border: 0 solid #ccc;
  }

  .crop.tl,
  .crop.bl {
    left: 72px;
    border-right-width: 1px;
  }

  .crop.tr,
  .crop.br {
    right: 73px;
    border-left-width: 1px;
  }

  .crop.tl,
  .crop.tr {
    top: 56px;
    border-bottom-width: 1px;
  }

  .crop.bl,
  .crop.br {
    bottom: 55px;
    border-top-width: 1px;
  }

  .title {
    margin: 0;
    font-size: 18px;
    line-height: 54px;
    color: #333;
  }

  .line {
    position: relative;
    z-index: 0;
    margin: 0;
    height: 31px;
    line-height: 31px;
    white-space: nowrap;
  }

  .line.full {
    text-align: justify;
    text-align-last: justify;
  }

  .caption {
    text-align: center;
    font-size: 11px;
    color: #555;
  }

  .blank {
    position: relative;
    height: 32px;
  }

  .sel {
    position: absolute;
    z-index: -1;
    top: 0;
    bottom: 0;
    background: rgba(0, 0, 0, 0.22);
  }

  .blank .sel {
    z-index: 0;
  }

  .code {
    position: relative;
    z-index: 0;
    padding: 12px 0;
    font-size: 11px;
  }

  .code::before {
    content: "";
    position: absolute;
    z-index: -1;
    inset: 4px -8px;
    background: #f7f7f7;
    border: 1px solid #e6e6e6;
  }

  .code .line span {
    white-space: pre;
  }

  .code .line:first-child .sel {
    top: -12px;
  }

  .code .line:last-child .sel {
    bottom: -12px;
  }

  .err {
    text-decoration: underline wavy #e04848 1px;
    text-decoration-skip-ink: none;
  }

  .link {
    color: #1f6fa5;
  }

  .term {
    color: #157a15;
  }

  .mark {
    padding: 3px 0;
    background: #f5f5f5;
    outline: 1px solid #ddd;
  }

  .paste-option {
    position: absolute;
    left: -50px;
    top: 7px;
    display: flex;
    align-items: center;
    gap: 5px;
  }

  .pointer {
    position: absolute;
    left: 307px;
    top: -6px;
    width: 43px;
    height: 43px;
    border-radius: 50%;
    background: rgba(224, 228, 30, 0.45);
  }

  .cursor {
    position: absolute;
    left: 20px;
    top: 22px;
    width: 13px;
    height: 13px;
  }

  .cells {
    margin: 36px auto 0;
    width: 336px;
    table-layout: fixed;
    border-collapse: collapse;
    font: 14px "Liberation Serif", serif;
    color: #111;
  }

  .cells td {
    height: 18px;
    padding: 0;
    line-height: 18px;
    text-align: center;
    background: #e6e6e6;
    border: 1px solid #333;
  }

  .cells .index td {
    height: 22px;
    background: none;
    border: none;
  }

  .figure {
    display: flex;
    flex-direction: column;
    align-items: center;
    gap: 18px;
    padding: 32px 0 4px;
    font-family: "Liberation Serif", "Noto Sans CJK SC", serif;
    font-size: 20px;
    color: #111;
  }

  .figure-row {
    display: flex;
    align-items: center;
    width: 224px;
    height: 28px;
  }

  .figure-label {
    width: 110px;
    text-align: center;
    white-space: nowrap;
  }

  .boxes {
    display: flex;
    margin-left: 13px;
  }

  .boxes.single {
    margin-left: 40px;
  }

  .boxes b {
    width: 49px;
    line-height: 26px;
    text-align: center;
    font-weight: normal;
    background: #e2e2e2;
    border: 1px solid #222;
  }

  .boxes b + b {
    border-left: none;
  }

  .scrollbar {
    width: 10px;
    background: #dedede;
    display: flex;
    flex-direction: column;
    align-items: center;
  }

  .scrollbar .caret {
    margin: 7px 0 0;
  }

  .scrollbar .caret.up {
    margin: 8px 0 6px;
  }

  .thumb {
    flex: 0 0 49%;
    box-sizing: border-box;
    width: 10px;
    background: #f8f8f8;
    border: 1px solid #b5b5b5;
    border-radius: 5px;
  }

  .jump {
    margin-top: auto;
    display: flex;
    flex-direction: column;
    align-items: center;
    gap: 5px;
    padding-bottom: 6px;
  }

  /* status bar */
  .status {
    position: relative;
    display: flex;
    align-items: center;
    height: 21px;
    padding-left: 7px;
    background: #f5f5f5;
    color: #666;
    flex: none;
  }

  .status .sep {
    margin-right: 7px;
    height: 15px;
    background: #e2e2e2;
  }

  .status-item {
    display: flex;
    align-items: center;
    gap: 3px;
    margin-right: 5px;
    white-space: nowrap;
  }

  .status-item + .status-item {
    margin-left: 5px;
  }

  .status-item svg {
    color: #555;
  }

  .ime {
    position: absolute;
    right: 471px;
    top: 2px;
    display: flex;
    align-items: center;
    box-sizing: border-box;
    height: 18px;
    gap: 4px;
    padding: 0 3px 0 25px;
    background: #fff;
    border: 1px solid #ccc;
  }

  .ime-logo {
    position: absolute;
    left: -2px;
    top: -4px;
  }

  .ime-cn {
    font-size: 12px;
    line-height: 16px;
    font-weight: bold;
    color: #b81414;
  }

  .views {
    margin-left: auto;
    display: flex;
    gap: 3px;
    margin-right: 8px;
  }

  .views button {
    width: 16px;
    height: 17px;
    justify-content: center;
    color: #555;
  }

  .views .on {
    background: #c9c9c9;
    border-radius: 2px;
  }

  .zoom-value {
    gap: 5px;
    margin-right: 7px;
  }

  .zoom {
    appearance: none;
    width: 106px;
    height: 10px;
    margin: 0 7px;
    background: linear-gradient(#aaa, #aaa) center / 100% 1px no-repeat;
  }

  .zoom::-webkit-slider-thumb {
    appearance: none;
    box-sizing: border-box;
    width: 10px;
    height: 10px;
    border: 1px solid #555;
    border-radius: 50%;
    background: #f5f5f5;
  }

  .fit {
    margin: 0 10px 0 8px;
  }

  /* taskbar */
  .taskbar {
    display: flex;
    height: 30px;
    background: linear-gradient(90deg, #241d28 0, #1e1f2b 18%, #142636 35%, #1a2a3e 60%, #232e40 85%, #22312b 96%, #1e3022 100%);
    color: #fff;
    flex: none;
  }

  .taskbar button {
    justify-content: center;
  }

  .start {
    width: 36px;
  }

  .vee {
    width: 24px;
    margin-left: 15px;
  }

  .cortana {
    width: 32px;
  }

  .taskview {
    width: 34px;
  }

  .app-button {
    width: 37px;
  }

  .app-button.running {
    background: linear-gradient(#6aa9e8, #6aa9e8) bottom / 30px 2px no-repeat;
  }

  .app-button.focused {
    background: linear-gradient(#6aa9e8, #6aa9e8) bottom / 100% 2px no-repeat, #4b4c5c;
  }

  .tray {
    margin-left: auto;
    display: flex;
    align-items: center;
    gap: 4px;
  }

  .tray-cn {
    font-size: 11px;
    width: 14px;
    text-align: center;
  }

  .tray-sogou {
    margin-left: 3px;
  }

  .clock {
    display: flex;
    flex-direction: column;
    align-items: center;
    width: 64px;
    line-height: 14px;
    margin: 0 2px 0 1px;
  }

  .desktop-edge {
    width: 3px;
    height: 30px;
    margin-left: 10px;
    border-left: 1px solid #556;
  }
</style>
